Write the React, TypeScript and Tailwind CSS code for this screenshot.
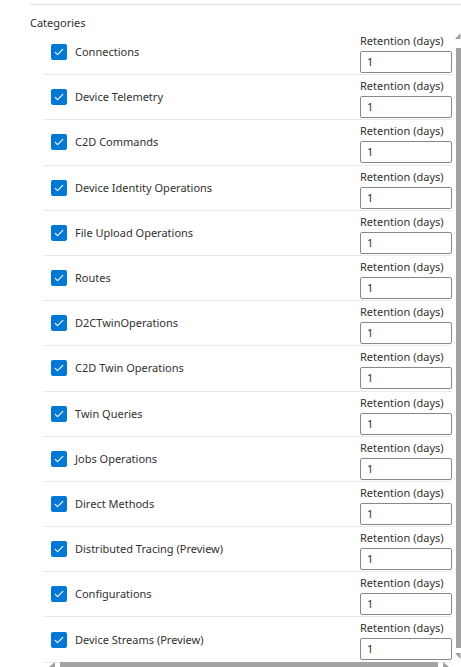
import React from "react";

const categories = [
  "Connections",
  "Device Telemetry",
  "C2D Commands",
  "Device Identity Operations",
  "File Upload Operations",
  "Routes",
  "D2CTwinOperations",
  "C2D Twin Operations",
  "Twin Queries",
  "Jobs Operations",
  "Direct Methods",
  "Distributed Tracing (Preview)",
  "Configurations",
  "Device Streams (Preview)",
];

function Check() {
  return (
    <span className="flex h-4 w-4 shrink-0 items-center justify-center rounded-[2px] bg-[#0078d4]">
      <svg width="12" height="12" viewBox="0 0 12 12" fill="none">
        <path d="M2.2 6.3 L4.6 8.6 L9.8 3.4" stroke="#ffffff" strokeWidth="1.1" strokeLinecap="round" strokeLinejoin="round" />
      </svg>
    </span>
  );
}

export default function App() {
  return (
    <div
      className="relative h-[667px] w-[461px] overflow-hidden bg-white text-[11px] text-[#323130]"
      style={{ fontFamily: '"Noto Sans", "Segoe UI", sans-serif' }}
    >
      <div className="ml-[30px] mt-[4px] h-px bg-[#e1dfdd]" />
      <div className="ml-[30px] mt-[10px] leading-[16px]">Categories</div>
      <div className="ml-[43px] mt-[-1px] w-[409px]">
        {categories.map((c) => (
          <div key={c} className="flex h-[45.2px] items-center border-b border-[#edebe9] pl-2">
            <div className="flex flex-1 items-center gap-2">
              <Check />
              <span className="leading-[16px]">{c}</span>
            </div>
            <div className="flex w-[92px] flex-col self-start pt-[3px]">
              <span className="leading-[16px]">Retention (days)</span>
              <div className="mt-[2px] flex h-[22px] items-center rounded-[2px] border border-[#8a8886] pl-[6px] leading-[16px]">
                1
              </div>
            </div>
          </div>
        ))}
      </div>

      {/* vertical scrollbar */}
      <div className="absolute right-0 top-[30px] flex h-[630px] w-[7px] flex-col items-end">
        <svg width="7" height="8" viewBox="0 0 7 8" className="mt-[2px]">
          <path d="M6.5 1 L6.5 7 L1 7 Z" fill="#a0a0a0" />
        </svg>
        <div className="mt-[8px] w-[5px] flex-1 bg-[#a3a3a3]" />
        <svg width="7" height="8" viewBox="0 0 7 8" className="mt-[4px]">
          <path d="M6.5 1 L6.5 7 L1 1 Z" fill="#a0a0a0" />
        </svg>
      </div>

      {/* horizontal scrollbar */}
      <div className="absolute bottom-0 left-[48px] flex h-[6px] w-[402px] items-end">
        <svg width="8" height="6" viewBox="0 0 8 6">
          <path d="M7 1 L7 6 L1 6 Z" fill="#a0a0a0" />
        </svg>
        <div className="ml-[4px] h-[5px] w-[378px] bg-[#a3a3a3]" />
        <svg width="8" height="6" viewBox="0 0 8 6" className="ml-[4px]">
          <path d="M1 1 L7 6 L1 6 Z" fill="#a0a0a0" />
        </svg>
      </div>
    </div>
  );
}
